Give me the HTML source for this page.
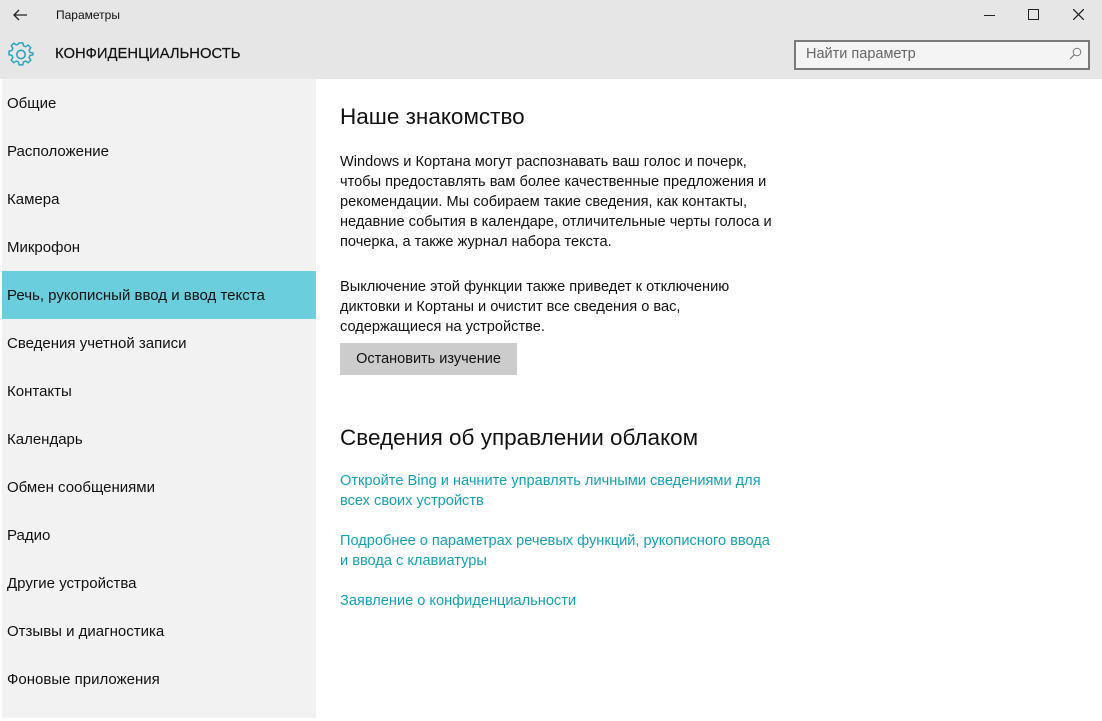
<!DOCTYPE html>
<html><head><meta charset="utf-8"><style>
*{margin:0;padding:0;box-sizing:border-box}
body{width:1102px;height:721px;background:#fff;font-family:"Liberation Sans","DejaVu Sans",sans-serif;color:#000;position:relative;overflow:hidden}
.hdr{position:absolute;left:0;top:0;width:1102px;height:79px;background:#e6e6e6}
.side{position:absolute;left:2px;top:79px;width:314px;height:639px;background:#f2f2f2}
.it{position:absolute;left:0;width:314px;height:48px;line-height:50px;padding-left:5px;font-size:15px;color:#111}
.sel{background:#6acedc}
.t{position:absolute;font-size:14.6px;line-height:20px;color:#111}
h2{position:absolute;font-weight:normal;font-size:22.5px;color:#111;left:340px}
.lk{position:absolute;left:340px;font-size:14.6px;line-height:20px;color:#13a0b2}
</style></head><body>
<div class="hdr"></div>
<svg style="position:absolute;left:12px;top:8px" width="16" height="14" viewBox="0 0 16 14"><path d="M15 7H2M7 2L2 7l5 5" stroke="#222" stroke-width="1.3" fill="none"/></svg>
<div style="position:absolute;left:56px;top:8px;font-size:12px;color:#111">Параметры</div>
<div style="position:absolute;left:984px;top:15px;width:11px;height:1px;background:#222"></div>
<div style="position:absolute;left:1028px;top:9px;width:11px;height:11px;border:1.3px solid #222"></div>
<svg style="position:absolute;left:1073px;top:9px" width="11" height="11"><path d="M0 0L11 11M11 0L0 11" stroke="#222" stroke-width="1.3"/></svg>
<svg style="position:absolute;left:8px;top:42px" width="26" height="26" viewBox="0 0 26 26"><path d="M11 2h4l.7 3.2 2.3 1 2.8-1.8 2.8 2.8-1.8 2.8 1 2.3L26 13v0l0 2-3.2.7-1 2.3 1.8 2.8-2.8 2.8-2.8-1.8-2.3 1L15 26h-4l-.7-3.2-2.3-1-2.8 1.8-2.8-2.8 1.8-2.8-1-2.3L0 15v-4l3.2-.7 1-2.3-1.8-2.8 2.8-2.8 2.8 1.8 2.3-1z" transform="translate(1 -1) scale(.92)" fill="none" stroke="#2aa3bd" stroke-width="1.6"/><circle cx="13" cy="12.5" r="4.2" fill="none" stroke="#2aa3bd" stroke-width="1.6"/></svg>
<div style="position:absolute;left:55px;top:46px;font-size:14.8px;color:#111;-webkit-text-stroke:0.2px #111">КОНФИДЕНЦИАЛЬНОСТЬ</div>
<div style="position:absolute;left:794px;top:40px;width:296px;height:30px;border:2px solid #7a7a7a;background:#f4f4f4"></div>
<div style="position:absolute;left:806px;top:46px;font-size:14.5px;color:#666">Найти параметр</div>
<svg style="position:absolute;left:1069px;top:47px" width="13" height="13"><circle cx="8" cy="5" r="3.8" fill="none" stroke="#777" stroke-width="1"/><path d="M5.3 7.7L1 12" stroke="#777" stroke-width="1.2"/></svg>
<div class="side">
<div class="it" style="top:0">Общие</div>
<div class="it" style="top:48px">Расположение</div>
<div class="it" style="top:96px">Камера</div>
<div class="it" style="top:144px">Микрофон</div>
<div class="it sel" style="top:192px">Речь, рукописный ввод и ввод текста</div>
<div class="it" style="top:240px">Сведения учетной записи</div>
<div class="it" style="top:288px">Контакты</div>
<div class="it" style="top:336px">Календарь</div>
<div class="it" style="top:384px">Обмен сообщениями</div>
<div class="it" style="top:432px">Радио</div>
<div class="it" style="top:480px">Другие устройства</div>
<div class="it" style="top:528px">Отзывы и диагностика</div>
<div class="it" style="top:576px">Фоновые приложения</div>
</div>
<h2 style="top:104px">Наше знакомство</h2>
<div class="t" style="left:340px;top:152px;width:480px">Windows и Кортана могут распознавать ваш голос и почерк,<br>чтобы предоставлять вам более качественные предложения и<br>рекомендации. Мы собираем такие сведения, как контакты,<br>недавние события в календаре, отличительные черты голоса и<br>почерка, а также журнал набора текста.</div>
<div class="t" style="left:340px;top:277px;width:480px">Выключение этой функции также приведет к отключению<br>диктовки и Кортаны и очистит все сведения о вас,<br>содержащиеся на устройстве.</div>
<div style="position:absolute;left:340px;top:343px;width:177px;height:32px;background:#cccccc;font-size:14.5px;line-height:33px;text-align:center;color:#111">Остановить изучение</div>
<h2 style="top:425px">Сведения об управлении облаком</h2>
<div class="lk" style="top:471px">Откройте Bing и начните управлять личными сведениями для<br>всех своих устройств</div>
<div class="lk" style="top:531px">Подробнее о параметрах речевых функций, рукописного ввода<br>и ввода с клавиатуры</div>
<div class="lk" style="top:591px">Заявление о конфиденциальности</div>
</body></html>
